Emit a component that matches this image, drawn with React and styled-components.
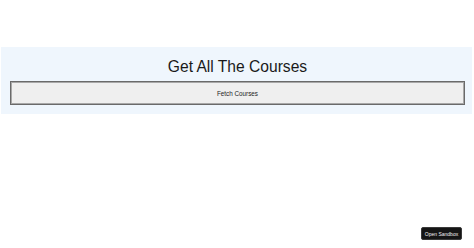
import React from "react";
import styled, { createGlobalStyle } from "styled-components";

const Global = createGlobalStyle`
  html, body { margin: 0; padding: 0; background: #ffffff; }
  body { font-family: "Liberation Sans", Arial, sans-serif; }
`;

const Panel = styled.section`
  margin: 47px 2px 0 1px;
  padding: 10px 7px 9px 9px;
  background: #eff6fd;
  display: flex;
  flex-direction: column;
  gap: 4px;
`;

const Title = styled.h1`
  margin: 0;
  font-family: "Liberation Sans", Arial, sans-serif;
  font-weight: 400;
  font-size: 15.6px;
  line-height: 20px;
  color: #1a1a1a;
  text-align: center;
`;

const FetchButton = styled.button`
  height: 24px;
  width: 100%;
  box-sizing: border-box;
  background: #efefef;
  border: 1px solid #6a6a6a;
  box-shadow: inset 0 0 0 1px #a8a8a8;
  font-family: "Liberation Sans", Arial, sans-serif;
  font-size: 6.3px;
  color: #222;
  padding: 0;
`;

const SandboxButton = styled.a`
  position: fixed;
  right: 12px;
  bottom: 8px;
  width: 41px;
  height: 13px;
  display: flex;
  align-items: center;
  justify-content: center;
  background: #151515;
  border: 1px solid #3a3a3a;
  border-radius: 2px;
  box-sizing: border-box;
  color: #f2f2f2;
  font-family: "Liberation Sans", Arial, sans-serif;
  font-size: 5px;
  text-decoration: none;
`;

export default function App() {
  return (
    <>
      <Global />
      <Panel>
        <Title>Get All The Courses</Title>
        <FetchButton>Fetch Courses</FetchButton>
      </Panel>
      <SandboxButton href="#">Open Sandbox</SandboxButton>
    </>
  );
}
